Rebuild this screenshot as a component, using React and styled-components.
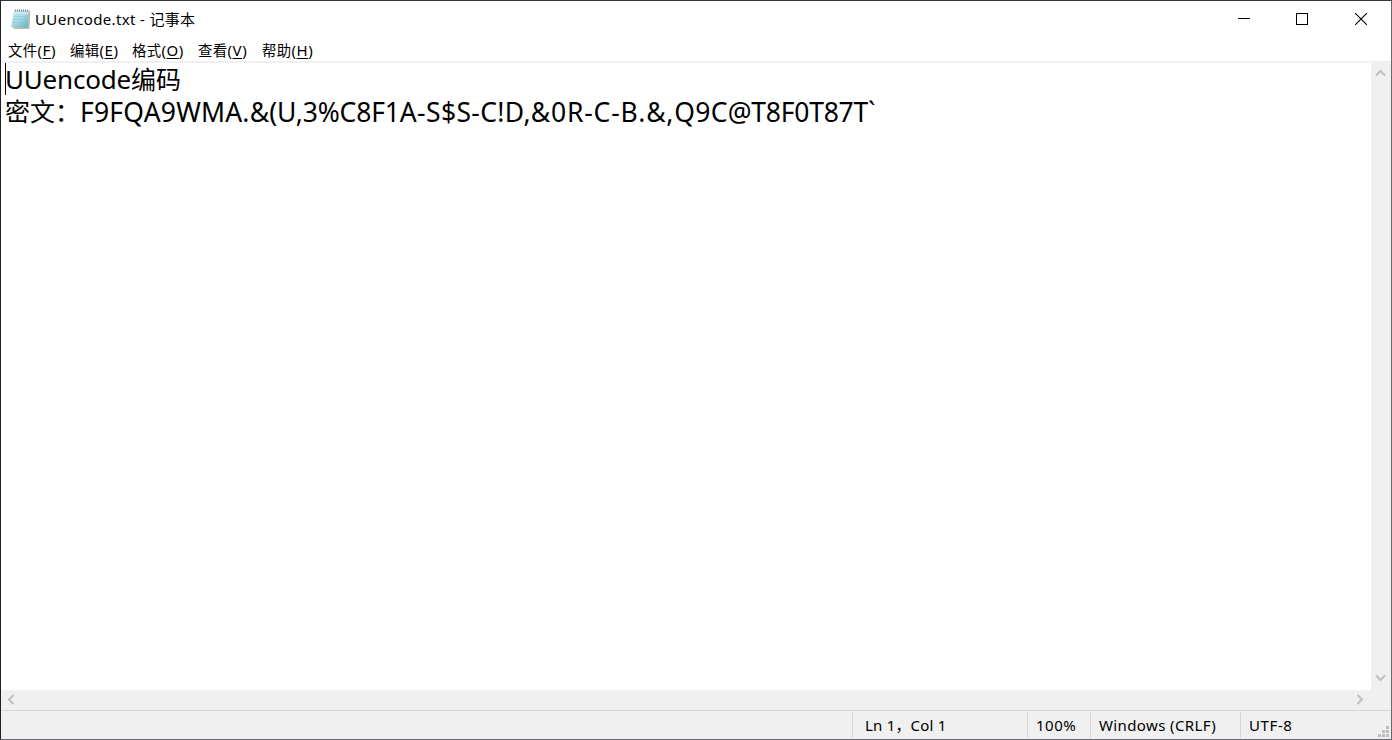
import React from 'react';
import styled, { createGlobalStyle } from 'styled-components';

const Global = createGlobalStyle`
  * { box-sizing: border-box; }
  html, body { margin: 0; height: 100%; overflow: hidden; background: #fff; }
  #root { height: 100%; }
`;

const Window = styled.div`
  display: flex;
  flex-direction: column;
  width: 1392px;
  height: 740px;
  border: 1px solid #68676b;
  border-left-color: #231f22;
  border-top-color: #39363a;
  background: #fff;
  color: #000;
  font-family: 'Noto Sans', 'Noto Sans CJK SC', sans-serif;
  font-size: 15px;
  white-space: pre;
  cursor: default;
`;

const TitleBar = styled.header`
  display: flex;
  height: 37px;
  padding: 0 2px 0 9px;
  flex: none;
`;

const Title = styled.h1`
  flex: 1;
  margin: 0 0 0 4px;
  font-size: 15px;
  font-weight: 400;
  line-height: 37px;
`;

const Run = styled.span`
  letter-spacing: ${({ $spacing = 0 }) => $spacing}px;
  font-size: ${({ $size }) => ($size ? `${$size}px` : 'inherit')};
`;

const CaptionButton = styled.button`
  display: flex;
  align-items: center;
  justify-content: center;
  width: 58px;
  height: 36px;
  padding: 0;
  border: 0;
  background: none;

  &:last-child {
    width: 60px;
    margin-right: -2px;
  }
`;

const MenuBar = styled.nav`
  display: flex;
  flex: none;
  height: 25px;
  padding-left: 7px;
  border-bottom: 2px solid #f0f0f0;
`;

const MenuItem = styled.div`
  width: ${({ $width }) => $width}px;
  height: 23px;
  font-size: 14.4px;
  line-height: 25px;
`;

const Mnemonic = styled.span`
  text-decoration: underline;
  text-decoration-thickness: 1px;
  text-underline-offset: 2px;
`;

const Editor = styled.main`
  display: flex;
  flex: 1;
  min-height: 0;
`;

const Page = styled.div`
  flex: 1;
  padding-left: 4px;
`;

const Line = styled.div`
  display: flex;
  height: 32px;
  font-size: 25px;
  line-height: 33px;
`;

const CipherRun = styled(Run)`
  line-height: 34px;
`;

const Caret = styled.span`
  width: 1px;
  height: 32px;
  margin-right: -1px;
  background: #000;
`;

const VerticalBar = styled.div`
  display: flex;
  flex-direction: column;
  justify-content: space-between;
  width: 20px;
  padding: 6px 5px 8px 4px;
  background: #f0f0f0;
`;

const HorizontalBar = styled.div`
  display: flex;
  flex: none;
  align-items: center;
  justify-content: space-between;
  height: 20px;
  padding: 0 27px 1px 6px;
  background: #f0f0f0;
`;

const StatusBar = styled.footer`
  display: flex;
  flex: none;
  height: 29px;
  padding: 1px 0 1px 851px;
  border-top: 1px solid #d7d7d7;
  background: #f0f0f0;
`;

const StatusCell = styled.div`
  width: ${({ $width }) => $width}px;
  padding-left: ${({ $pad = 8 }) => $pad}px;
  border-left: 1px solid #d7d7d7;
  font-size: 15px;
  line-height: 27px;
`;

const Grip = styled.svg`
  display: block;
  align-self: flex-end;
  margin: 0 0 0 auto;
`;

const Glyph = styled.svg`
  display: block;
  flex: none;
`;

const NotepadIcon = () => (
  <Glyph width="21" height="37" viewBox="0 0 21 37">
    <defs>
      <linearGradient id="sheet" x1="0" y1="0" x2="1" y2="1">
        <stop offset="0" stopColor="#cfebf1" />
        <stop offset="0.5" stopColor="#a6d8e4" />
        <stop offset="1" stopColor="#5dadc8" />
      </linearGradient>
    </defs>
    <path d="M18 9.5 L20.3 10 L19.6 28 L4 28 L3 26.5 Z" fill="#c8bba5" />
    <path d="M4 9.5 L18.8 9.5 L17.8 27 L1 26.2 Z" fill="url(#sheet)" />
    <path d="M4 12 L18.5 12" stroke="#e4f4f7" />
    <path d="M3.5 15.5H18M3 18.5H17.8M2.5 21.5H17.5M2 24.5H17" stroke="#72b8cc" strokeWidth="0.3" />
    <path d="M5 9.5H18.5" stroke="#7c8c8c" strokeWidth="2" strokeDasharray="1 1" />
  </Glyph>
);

const Chevron = ({ d, w, h }) => (
  <Glyph width={w} height={h} viewBox={`0 0 ${w} ${h}`}>
    <path d={d} fill="none" stroke="#bfbfbf" strokeWidth="2" />
  </Glyph>
);

const menus = [
  ['文件', 'F', 62],
  ['编辑', 'E', 62],
  ['格式', 'O', 66],
  ['查看', 'V', 64],
  ['帮助', 'H', 60],
];

const cipher = [
  ['F9FQA9WMA.&', 0.2],
  ['(U,3%C8F1', -0.15],
  ['A-S$S-C!D,', 0.35],
  ['&0R-C-B.&,', 0.8],
  ['Q9C', 0.3],
  ['@T8F0T87T`', -0.25],
];

export default function App() {
  return (
    <>
      <Global />
      <Window>
        <TitleBar>
          <NotepadIcon />
          <Title>
            <Run $spacing={0.37}>UUencode.txt - </Run>
            <Run $spacing={0.2}>记事本</Run>
          </Title>
          <CaptionButton aria-label="Minimize">
            <Glyph width="12" height="12" shapeRendering="crispEdges"><path d="M0 5.5H12" stroke="#000" /></Glyph>
          </CaptionButton>
          <CaptionButton aria-label="Maximize">
            <Glyph width="12" height="12" shapeRendering="crispEdges"><path d="M.5 .5H11.5V11.5H.5Z" fill="none" stroke="#000" /></Glyph>
          </CaptionButton>
          <CaptionButton aria-label="Close">
            <Glyph width="12" height="12"><path d="M0 0L12 12M12 0L0 12" stroke="#000" strokeWidth="1.1" /></Glyph>
          </CaptionButton>
        </TitleBar>
        <MenuBar>
          {menus.map(([label, key, width]) => (
            <MenuItem key={key} $width={width}>
              <Run $spacing={0.4}>{label}</Run>
              <Run $size={15} $spacing={0.5}>(<Mnemonic>{key}</Mnemonic>)</Run>
            </MenuItem>
          ))}
        </MenuBar>
        <Editor>
          <Page>
            <Line>
              <Caret />
              <Run $size={26} $spacing={-0.2}>UUencode</Run>
              <Run>编码</Run>
            </Line>
            <Line>
              <Run>密文：</Run>
              {cipher.map(([text, spacing]) => (
                <CipherRun key={text} $size={26.5} $spacing={spacing}>{text}</CipherRun>
              ))}
            </Line>
          </Page>
          <VerticalBar>
            <Chevron w={11} h={8} d="M1 6.5L5.5 2L10 6.5" />
            <Chevron w={11} h={8} d="M1 1.5L5.5 6L10 1.5" />
          </VerticalBar>
        </Editor>
        <HorizontalBar>
          <Chevron w={8} h={11} d="M6.5 1L2 5.5L6.5 10" />
          <Chevron w={8} h={11} d="M1.5 1L6 5.5L1.5 10" />
        </HorizontalBar>
        <StatusBar>
          <StatusCell $width={175} $pad={12}><Run $spacing={0.2}>Ln 1，Col 1</Run></StatusCell>
          <StatusCell $width={63}><Run $spacing={0.5}>100%</Run></StatusCell>
          <StatusCell $width={150}><Run $spacing={0.38}>Windows (CRLF)</Run></StatusCell>
          <StatusCell $width={130}><Run $spacing={0.6}>UTF-8</Run></StatusCell>
          <Grip width="14" height="12" fill="#bfbfbf" shapeRendering="crispEdges">
            <path d="M9 0h3v3h-3zM9 4h3v3h-3zM5 4h3v3h-3zM9 8h3v3h-3zM5 8h3v3h-3zM1 8h3v3h-3z" />
          </Grip>
        </StatusBar>
      </Window>
    </>
  );
}
